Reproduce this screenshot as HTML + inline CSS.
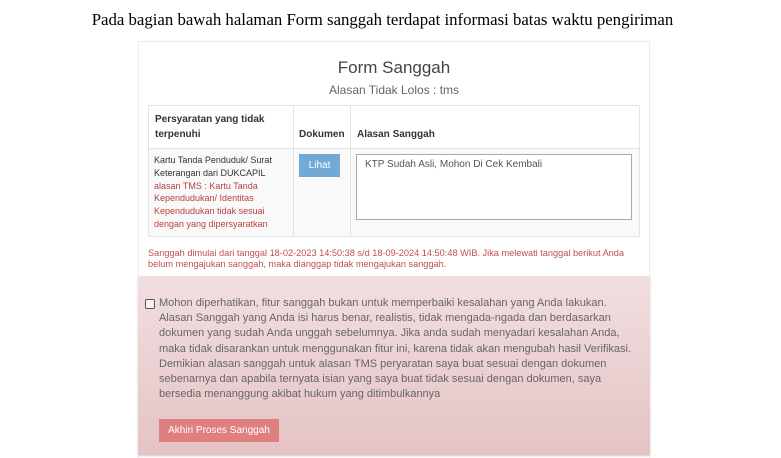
<!DOCTYPE html>
<html><head><meta charset="utf-8"><style>
body{margin:0;width:781px;height:457px;background:#fff;position:relative;overflow:hidden;font-family:"Liberation Sans",sans-serif}
.a{position:absolute}
.t{left:0;width:765px;top:10px;text-align:center;font-family:"Liberation Serif",serif;font-size:16.8px;color:#000}
.panel{left:138px;top:41px;width:510px;height:416px;border:1px solid #e6eef0;border-bottom:none;background:#fff}
.pink{left:138px;top:276px;width:512px;height:179px;background:linear-gradient(#f1dfe0,#e5c3c5);box-shadow:0 1px 2px #ccc}
table{position:absolute;left:148px;top:105px;width:491px;table-layout:fixed;border-collapse:collapse;font-size:9.5px;color:#333}
td,th{border:1px solid #e3e3e3;vertical-align:top;text-align:left}
th{font-weight:bold;font-size:10px;vertical-align:bottom;padding:6px 6px 6px 6px;line-height:15px}
.red{color:#b94040}
.m{color:#666;font-size:11px;line-height:15.2px}
</style></head><body>
<div class="a t">Pada bagian bawah halaman Form sanggah terdapat informasi batas waktu pengiriman</div>
<div class="a panel"></div>
<div class="a" style="left:138px;width:512px;top:58px;text-align:center;font-size:17px;color:#444">Form Sanggah</div>
<div class="a" style="left:138px;width:512px;top:83px;text-align:center;font-size:12px;color:#666">Alasan Tidak Lolos : tms</div>
<table>
<colgroup><col style="width:145px"><col style="width:57px"><col style="width:289px"></colgroup>
<tr style="height:40px"><th>Persyaratan yang tidak terpenuhi</th><th style="padding:6px 5px">Dokumen</th><th>Alasan Sanggah</th></tr>
<tr style="height:88px;background:#f9f9f9"><td style="padding:5px 5px;line-height:12.8px;font-size:9px">Kartu Tanda Penduduk/ Surat Keterangan dari DUKCAPIL<br><span class="red">alasan TMS : Kartu Tanda Kependudukan/ Identitas Kependudukan tidak sesuai dengan yang dipersyaratkan</span></td>
<td style="padding:5px 5px"><div style="width:41px;height:23px;background:#72a9d6;color:#fff;text-align:center;line-height:23px;font-size:10px">Lihat</div></td>
<td style="padding:5px 5px"><div style="width:258px;height:56px;border:1px solid #aaa;background:#fff;padding:4px 8px;font-size:10px;color:#555">KTP Sudah Asli, Mohon Di Cek Kembali</div></td></tr>
</table>
<div class="a red" style="left:148px;top:248px;width:492px;font-size:9.2px;line-height:11px;color:#c0504d">Sanggah dimulai dari tanggal 18-02-2023 14:50:38 s/d 18-09-2024 14:50:48 WIB. Jika melewati tanggal berikut Anda belum mengajukan sanggah, maka dianggap tidak mengajukan sanggah.</div>
<div class="a pink"></div>
<div class="a" style="left:145px;top:299px;width:8px;height:8px;border:1px solid #555;border-radius:2px;background:#fbf3f3"></div>
<div class="a m" style="left:159px;top:296px;width:478px">Mohon diperhatikan, fitur sanggah bukan untuk memperbaiki kesalahan yang Anda lakukan.<br>Alasan Sanggah yang Anda isi harus benar, realistis, tidak mengada-ngada dan berdasarkan<br>dokumen yang sudah Anda unggah sebelumnya. Jika anda sudah menyadari kesalahan Anda,<br>maka tidak disarankan untuk menggunakan fitur ini, karena tidak akan mengubah hasil Verifikasi.<br>Demikian alasan sanggah untuk alasan TMS peryaratan saya buat sesuai dengan dokumen<br>sebenarnya dan apabila ternyata isian yang saya buat tidak sesuai dengan dokumen, saya<br>bersedia menanggung akibat hukum yang ditimbulkannya</div>
<div class="a" style="left:159px;top:419px;width:120px;height:23px;background:#e07f80;color:#fff;font-size:10px;line-height:23px;text-align:center">Akhiri Proses Sanggah</div>
</body></html>
